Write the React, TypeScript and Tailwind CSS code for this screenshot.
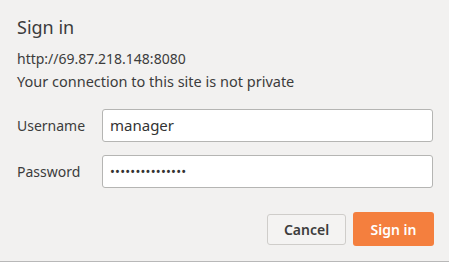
export default function App() {
  return (
    <div className="h-[264px] w-[449px] bg-white" style={{ fontFamily: '"Noto Sans", "Open Sans", sans-serif' }}>
      <div className="flex h-[262px] flex-col border-b border-[#b8b8b8] bg-[#f2f1f0] pl-[17px] pr-[16px] text-[#3c3c3c]">
        <h1 className="mt-[15px] text-[18px] leading-[24px]">Sign in</h1>
        <div className="mt-[9px] text-[14px] leading-[22px]">http://69.87.218.148:8080</div>
        <div className="text-[14.5px] leading-[22px]">Your connection to this site is not private</div>

        <div className="mt-[17px] flex flex-col gap-[13px]">
          <div className="flex items-center">
            <label className="w-[85px] text-[14px]">Username</label>
            <div className="flex h-[33px] flex-1 items-center rounded-[3px] border border-[#b5b5b3] bg-white px-[7px] text-[15px] text-[#333]">
              manager
            </div>
          </div>
          <div className="flex items-center">
            <label className="w-[85px] text-[14px]">Password</label>
            <div className="flex h-[33px] flex-1 items-center rounded-[3px] border border-[#b5b5b3] bg-white px-[7px] text-[13px] tracking-[0.2px] text-[#333]">
              •••••••••••••••
            </div>
          </div>
        </div>

        <div className="-mr-[1px] mt-[24px] flex items-center justify-end gap-[7px]">
          <button className="h-[31px] w-[79px] rounded-[3px] border border-[#cfcdca] bg-[#f4f3f2] text-[14px] font-semibold text-[#3c3c3c]">
            Cancel
          </button>
          <button className="h-[34px] w-[81px] rounded-[3px] bg-[#f47f3e] text-[14px] font-semibold text-white">
            Sign in
          </button>
        </div>
      </div>
    </div>
  );
}
